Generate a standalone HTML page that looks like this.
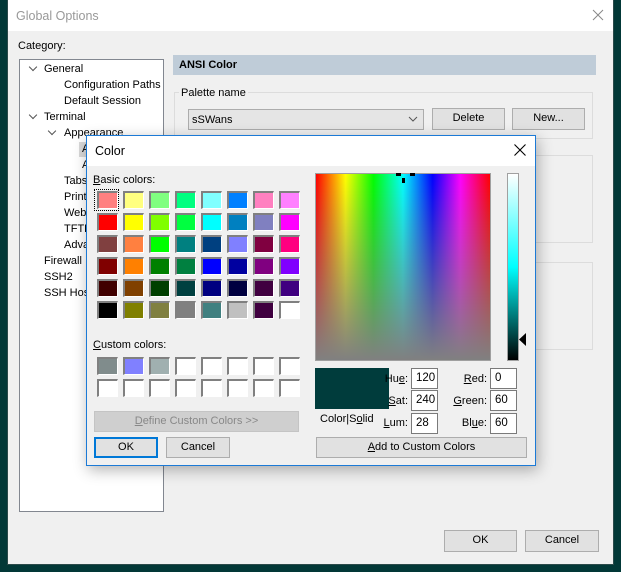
<!DOCTYPE html>
<html><head><meta charset="utf-8"><style>
*{box-sizing:border-box;margin:0;padding:0}
body{width:621px;height:572px;background:#023837;font-family:"Liberation Sans",sans-serif;font-size:11px;color:#000;position:relative;overflow:hidden}
.a{position:absolute}
.btn{position:absolute;background:#e1e1e1;border:1px solid #adadad;text-align:center;line-height:19px;font-size:11px}
.gb{position:absolute;border:1px solid #dcdcdc}
.t{position:absolute;white-space:nowrap;line-height:14px}
.r{text-align:right;width:60px}
.sw{position:absolute;width:21px;height:18px;border-top:2px solid #808080;border-left:2px solid #808080;border-right:1px solid #fff;border-bottom:1px solid #fff}
.in{position:absolute;width:27px;height:21px;background:#fff;border:1px solid #7a7a7a;padding:3px 0 0 4px;font-size:11.5px}
.chev{position:absolute;width:6px;height:6px;border-right:1.3px solid #555;border-bottom:1.3px solid #555;transform:rotate(45deg)}
</style></head><body>
<div class="a" style="left:7px;top:0;width:607px;height:565px;background:#f0f0f0;border:1px solid #2b4a4a"></div>
<div class="a" style="left:8px;top:0;width:605px;height:31px;background:#fff"></div>
<div class="t" style="left:16px;top:9px;font-size:12.5px;color:#999">Global Options</div>
<svg class="a" style="left:592px;top:9px" width="12" height="12"><path d="M1 1L11 11M11 1L1 11" stroke="#888" stroke-width="1"/></svg>
<div class="t" style="left:18px;top:39px">Category:</div>
<div class="a" style="left:19px;top:59px;width:145px;height:453px;background:#fff;border:1px solid #828790"></div>
<div class="a" style="left:173px;top:55px;width:423px;height:20px;background:#bfccd8"></div>
<div class="t" style="left:179px;top:58px;font-weight:bold">ANSI Color</div>
<div class="gb" style="left:174px;top:92px;width:419px;height:47px"></div>
<div class="t" style="left:179px;top:86px;background:#f0f0f0;padding:0 2px">Palette name</div>
<div class="a" style="left:188px;top:109px;width:236px;height:21px;background:#e5e5e5;border:1px solid #acacac"></div>
<div class="t" style="left:192px;top:113px">sSWans</div>
<svg class="a" style="left:408px;top:116px" width="10" height="6"><path d="M1 1L5 5L9 1" stroke="#555" fill="none"/></svg>
<div class="btn" style="left:432px;top:108px;width:73px;height:22px">Delete</div>
<div class="btn" style="left:512px;top:108px;width:73px;height:22px">New...</div>
<div class="gb" style="left:174px;top:155px;width:419px;height:88px"></div>
<div class="gb" style="left:174px;top:262px;width:419px;height:88px"></div>
<div class="btn" style="left:444px;top:530px;width:73px;height:22px">OK</div>
<div class="btn" style="left:525px;top:530px;width:74px;height:22px">Cancel</div>
<!-- tree -->
<div class="chev" style="left:30px;top:64px"></div>
<div class="t" style="left:44px;top:62px">General</div>
<div class="t" style="left:64px;top:78px">Configuration Paths</div>
<div class="t" style="left:64px;top:94px">Default Session</div>
<div class="chev" style="left:30px;top:112px"></div>
<div class="t" style="left:44px;top:110px">Terminal</div>
<div class="chev" style="left:49px;top:128px"></div>
<div class="t" style="left:64px;top:126px">Appearance</div>
<div class="a" style="left:79px;top:142px;width:10px;height:15px;background:#d9d9d9"></div>
<div class="t" style="left:82px;top:142px">A</div>
<div class="t" style="left:82px;top:158px">A</div>
<div class="t" style="left:64px;top:174px">Tabs</div>
<div class="t" style="left:64px;top:190px">Print</div>
<div class="t" style="left:64px;top:206px">Web</div>
<div class="t" style="left:64px;top:222px">TFTP</div>
<div class="t" style="left:64px;top:238px">Adva</div>
<div class="t" style="left:44px;top:254px">Firewall</div>
<div class="t" style="left:44px;top:270px">SSH2</div>
<div class="t" style="left:44px;top:286px">SSH Host</div>
<!-- color dialog -->
<div class="a" style="left:86px;top:135px;width:450px;height:331px;background:#f0f0f0;border:1px solid #1c7ad6;box-shadow:2px 4px 14px rgba(0,0,0,0.3)">
  <div class="a" style="left:0;top:0;width:448px;height:30px;background:#fff"></div>
  <div class="t" style="left:8px;top:8px;font-size:12.5px">Color</div>
  <svg class="a" style="left:427px;top:8px" width="12" height="12"><path d="M0.5 0.5L11.5 11.5M11.5 0.5L0.5 11.5" stroke="#000" stroke-width="1.1"/></svg>
</div>
<div class="t" style="left:93px;top:173px"><u>B</u>asic colors:</div>
<div class="a" style="left:94px;top:189px;width:25px;height:22px;border:1px dotted #000"></div>
<div id="g"></div>
<div class="t" style="left:93px;top:338px"><u>C</u>ustom colors:</div>
<div class="btn" style="left:94px;top:411px;width:205px;height:21px;color:#888;background:#cfcfcf;border-color:#c4c4c4"><u>D</u>efine Custom Colors &gt;&gt;</div>
<div class="btn" style="left:94px;top:437px;width:64px;height:21px;border:2px solid #0078d7;line-height:17px">OK</div>
<div class="btn" style="left:166px;top:437px;width:64px;height:21px">Cancel</div>
<div class="a" style="left:315px;top:173px;width:176px;height:188px;border:1px solid #a0a0a0;background:linear-gradient(to bottom,rgba(128,128,128,0),#808080),linear-gradient(to right,#f00,#ff0 17%,#0f0 33%,#0ff 50%,#00f 67%,#f0f 83%,#f00)"></div>
<div class="a" style="left:396px;top:173px;width:5px;height:3px;background:#000"></div>
<div class="a" style="left:410px;top:173px;width:5px;height:3px;background:#000"></div>
<div class="a" style="left:402px;top:178px;width:3px;height:5px;background:#000"></div>
<div class="a" style="left:507px;top:173px;width:12px;height:188px;border:1px solid #a0a0a0;background:linear-gradient(to bottom,#fff,#0ff 50%,#000)"></div>
<svg class="a" style="left:519px;top:333px" width="8" height="13"><path d="M0 6.5L7 0V13Z" fill="#000"/></svg>
<div class="a" style="left:315px;top:368px;width:74px;height:41px;background:#003c3c"></div>
<div class="t" style="left:320px;top:412px">Color|S<u>o</u>lid</div>
<div class="t r" style="left:348px;top:372px">Hu<u>e</u>:</div>
<div class="t r" style="left:348px;top:394px"><u>S</u>at:</div>
<div class="t r" style="left:348px;top:416px"><u>L</u>um:</div>
<div class="in" style="left:411px;top:368px">120</div>
<div class="in" style="left:411px;top:390px">240</div>
<div class="in" style="left:411px;top:413px">28</div>
<div class="t r" style="left:427px;top:372px"><u>R</u>ed:</div>
<div class="t r" style="left:427px;top:394px"><u>G</u>reen:</div>
<div class="t r" style="left:427px;top:416px">Bl<u>u</u>e:</div>
<div class="in" style="left:490px;top:368px">0</div>
<div class="in" style="left:490px;top:390px">60</div>
<div class="in" style="left:490px;top:413px">60</div>
<div class="btn" style="left:316px;top:437px;width:211px;height:21px"><u>A</u>dd to Custom Colors</div>
<script>
var c=[["#ff8080","#ffff80","#80ff80","#00ff80","#80ffff","#0080ff","#ff80c0","#ff80ff"],
["#ff0000","#ffff00","#80ff00","#00ff40","#00ffff","#0080c0","#8080c0","#ff00ff"],
["#804040","#ff8040","#00ff00","#008080","#004080","#8080ff","#800040","#ff0080"],
["#800000","#ff8000","#008000","#008040","#0000ff","#0000a0","#800080","#8000ff"],
["#400000","#804000","#004000","#004040","#000080","#000040","#400040","#400080"],
["#000000","#808000","#808040","#808080","#408080","#c0c0c0","#400040","#ffffff"]];
var cu=[["#808c8c","#8080ff","#a0b0b0","#fff","#fff","#fff","#fff","#fff"],["#fff","#fff","#fff","#fff","#fff","#fff","#fff","#fff"]];
var h="";
for(var r=0;r<6;r++)for(var k=0;k<8;k++)h+='<div class="sw" style="left:'+(97+k*26)+'px;top:'+(191+r*22)+'px;background:'+c[r][k]+'"></div>';
for(var r=0;r<2;r++)for(var k=0;k<8;k++)h+='<div class="sw" style="left:'+(97+k*26)+'px;top:'+(357+r*22)+'px;background:'+cu[r][k]+'"></div>';
document.getElementById("g").innerHTML=h;
</script>
</body></html>
